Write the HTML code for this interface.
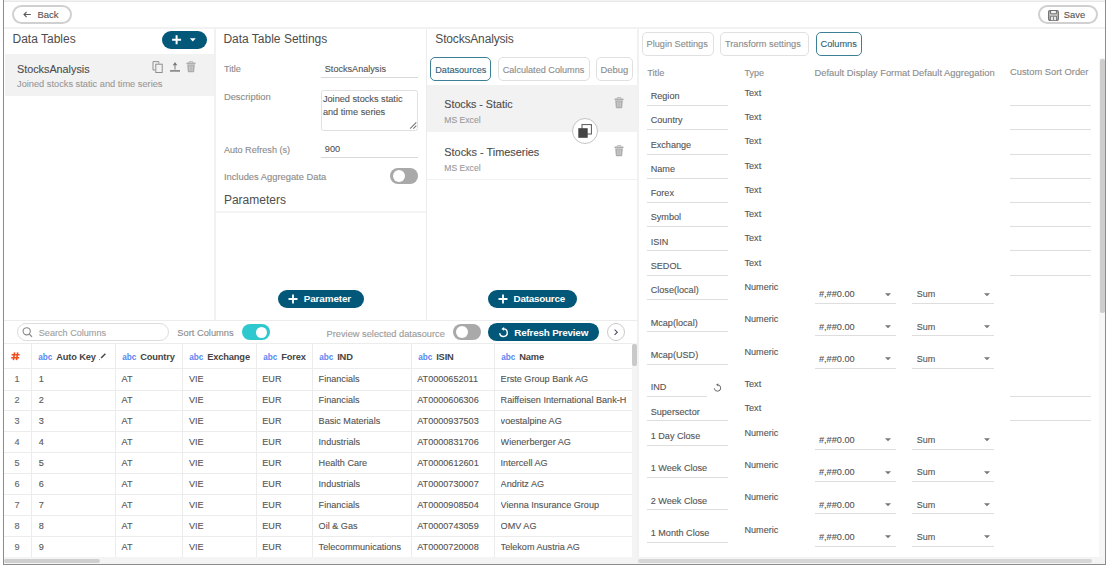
<!DOCTYPE html>
<html><head><meta charset="utf-8">
<style>
*{box-sizing:border-box;margin:0;padding:0}
html,body{width:1110px;height:568px;overflow:hidden;background:#fff;font-family:"Liberation Sans",sans-serif;color:#4a4a4a;position:relative}
.a{position:absolute}
.t{position:absolute;white-space:nowrap;line-height:1;-webkit-text-stroke:0.12px currentColor}
.b{-webkit-text-stroke:0}
</style></head>
<body>
<div class="a" style="left:4px;top:0px;width:1101px;height:1px;background:#f2f2f2"></div>
<div class="a" style="left:4px;top:1px;width:1101px;height:1px;background:#e9e9e9"></div>
<div class="a" style="left:3px;top:0px;width:1px;height:565px;background:#8c8c8c"></div>
<div class="a" style="left:1105px;top:0px;width:1px;height:565px;background:#8c8c8c"></div>
<div class="a" style="left:3px;top:564px;width:1103px;height:1px;background:#8c8c8c"></div>
<div class="a" style="left:4px;top:27px;width:1101px;height:2px;background:#f2f2f2"></div>
<div class="a" style="left:12px;top:5px;width:60px;height:19px;border:2px solid #d0d0d0;border-radius:9.5px;background:#fff"></div>
<svg class="a" style="left:22.5px;top:11px" width="9" height="7" viewBox="0 0 9 7"><path d="M1 3.5H7.8M3.6 0.8L1 3.5L3.6 6.2" stroke="#5a5a5a" stroke-width="1.1" fill="none"/></svg>
<div class="t" style="left:37.50px;top:10.16px;font-size:9.5px;color:#555;">Back</div>
<div class="a" style="left:1038px;top:5px;width:59.5px;height:19px;border:2px solid #d0d0d0;border-radius:9.5px;background:#fff"></div>
<svg class="a" style="left:1048px;top:9.5px" width="11" height="11" viewBox="0 0 11 11"><rect x="0.7" y="0.7" width="9.6" height="9.6" rx="1.2" stroke="#707070" stroke-width="1.3" fill="#d4d4d4"/><path d="M2.6 1V3.8H8.4V1" stroke="#6d6d6d" stroke-width="1" fill="#f4f4f4"/><path d="M2.4 10.2V6.2H8.6V10.2" stroke="#6d6d6d" stroke-width="0.9" fill="#e8e8e8"/><path d="M5.5 6.5V10" stroke="#6d6d6d" stroke-width="0.8"/></svg>
<div class="t" style="left:1063.80px;top:10.24px;font-size:9.4px;color:#555;">Save</div>
<div class="a" style="left:214px;top:29px;width:2px;height:291px;background:#f1f1f1"></div>
<div class="a" style="left:426px;top:29px;width:1px;height:291px;background:#ececec"></div>
<div class="a" style="left:637px;top:29px;width:2px;height:535px;background:#f1f1f1"></div>
<div class="a" style="left:4px;top:320px;width:633px;height:1px;background:#ececec"></div>
<div class="t b" style="left:12.50px;top:33.34px;font-size:12px;color:#4d4d4d;">Data Tables</div>
<div class="a" style="left:162px;top:31px;width:45px;height:18px;background:#035778;border-radius:9px"></div>
<svg class="a" style="left:171px;top:34px" width="28" height="12" viewBox="0 0 28 12"><path d="M5.6 1.2V10.2M1.1 5.7H10.1" stroke="#fff" stroke-width="2" fill="none"/><path d="M18.8 4.3H24.8L21.8 7.6Z" fill="#fff"/></svg>
<div class="a" style="left:5px;top:54px;width:209px;height:42px;background:#f2f2f2"></div>
<div class="t" style="left:17.00px;top:63.76px;font-size:10.8px;color:#4d4d4d;">StocksAnalysis</div>
<div class="t" style="left:17.00px;top:79.97px;font-size:9.25px;color:#9a9a9a;">Joined stocks static and time series</div>
<svg class="a" style="left:151.5px;top:61px" width="12" height="12" viewBox="0 0 12 12"><path d="M3 9H1V0.6H6.8V2.6" stroke="#8f8f8f" stroke-width="1" fill="none"/><rect x="3.8" y="3.2" width="6.4" height="8.3" stroke="#8f8f8f" stroke-width="1" fill="none"/></svg>
<svg class="a" style="left:168.5px;top:61.3px" width="12" height="11" viewBox="0 0 12 11"><path d="M6 8.6V1.8" stroke="#7a7a7a" stroke-width="1"/><path d="M3.6 4.2L6 1.2L8.4 4.2Z" fill="#7a7a7a"/><path d="M1 9.9H11" stroke="#7a7a7a" stroke-width="1.5"/></svg>
<svg class="a" style="left:186px;top:61px" width="10" height="12" viewBox="0 0 10 12"><path d="M3.3 1.6V0.9Q3.3 0.3 3.9 0.3H6.1Q6.7 0.3 6.7 0.9V1.6" stroke="#adadad" stroke-width="0.9" fill="none"/><rect x="0.4" y="1.6" width="9.2" height="1.6" rx="0.6" fill="#adadad"/><path d="M1.2 3.6H8.8L8.2 10.4Q8.1 11.2 7.3 11.2H2.7Q1.9 11.2 1.8 10.4Z" fill="#adadad"/><path d="M3.6 4.6V10M5 4.6V10M6.4 4.6V10" stroke="#e9e9e9" stroke-width="0.45"/></svg>
<div class="t b" style="left:223.40px;top:33.34px;font-size:12px;color:#4d4d4d;">Data Table Settings</div>
<div class="t" style="left:223.90px;top:65.11px;font-size:9.2px;color:#8c8c8c;">Title</div>
<div class="t" style="left:324.80px;top:64.80px;font-size:9.1px;color:#555;">StocksAnalysis</div>
<div class="a" style="left:321px;top:77px;width:97px;height:1px;background:#d9d9d9"></div>
<div class="t" style="left:223.90px;top:92.44px;font-size:9.4px;color:#8c8c8c;">Description</div>
<div class="a" style="left:321px;top:90px;width:97px;height:40.5px;border:1.3px solid #e0e0e0;border-radius:2.5px;background:#fff"></div>
<div class="t" style="left:322.90px;top:95.41px;font-size:9.2px;color:#555;">Joined stocks static</div>
<div class="t" style="left:322.90px;top:107.81px;font-size:9.2px;color:#555;">and time series</div>
<svg class="a" style="left:409px;top:121px" width="9" height="9" viewBox="0 0 9 9"><path d="M1.1 7.6L7.3 1.4M4.3 7.6L7.3 4.6" stroke="#7a7a7a" stroke-width="1.1"/></svg>
<div class="t" style="left:223.90px;top:145.60px;font-size:9.1px;color:#8c8c8c;">Auto Refresh (s)</div>
<div class="t" style="left:324.80px;top:145.11px;font-size:9.2px;color:#555;">900</div>
<div class="a" style="left:321px;top:157px;width:97px;height:1px;background:#d9d9d9"></div>
<div class="t" style="left:223.90px;top:172.99px;font-size:9.35px;color:#8c8c8c;">Includes Aggregate Data</div>
<div class="a" style="left:390px;top:168px;width:28px;height:16px;background:#a9a9a9;border-radius:8px"></div>
<div class="a" style="left:392.7px;top:169.8px;width:12px;height:12px;background:#fff;border-radius:50%"></div>
<div class="t b" style="left:223.90px;top:193.64px;font-size:12px;color:#4d4d4d;">Parameters</div>
<div class="a" style="left:216px;top:211px;width:210px;height:2px;background:#f4f4f4"></div>
<div class="a" style="left:278px;top:290px;width:86px;height:18px;background:#035778;border-radius:9px"></div>
<svg class="a" style="left:288px;top:294px" width="10" height="10" viewBox="0 0 10 10"><path d="M5 0.5V9.5M0.5 5H9.5" stroke="#fff" stroke-width="1.8"/></svg>
<div class="t b" style="left:303.70px;top:293.82px;font-size:9.9px;color:#fff;font-weight:bold;letter-spacing:-0.1px;">Parameter</div>
<div class="t b" style="left:435.30px;top:32.84px;font-size:12px;color:#4d4d4d;letter-spacing:-0.17px;">StocksAnalysis</div>
<div class="a" style="left:430px;top:57px;width:61px;height:24px;border:1.3px solid #3d7f97;border-radius:5px"></div>
<div class="t" style="left:435.30px;top:65.90px;font-size:9.1px;color:#2f5f78;">Datasources</div>
<div class="a" style="left:497.5px;top:57px;width:92px;height:24px;border:1.4px solid #e0e0e0;border-radius:5px"></div>
<div class="t" style="left:502.70px;top:65.85px;font-size:9.15px;color:#8c8c8c;">Calculated Columns</div>
<div class="a" style="left:596px;top:57px;width:37px;height:24px;border:1.4px solid #e0e0e0;border-radius:5px"></div>
<div class="t" style="left:600.50px;top:64.94px;font-size:9.4px;color:#8c8c8c;">Debug</div>
<div class="a" style="left:427px;top:85px;width:210px;height:47px;background:#f2f2f2"></div>
<div class="t" style="left:444.30px;top:98.84px;font-size:10.7px;color:#4d4d4d;">Stocks - Static</div>
<div class="t" style="left:444.30px;top:116.02px;font-size:8.6px;color:#9a9a9a;">MS Excel</div>
<svg class="a" style="left:613.5px;top:97px" width="10" height="12" viewBox="0 0 10 12"><path d="M3.3 1.6V0.9Q3.3 0.3 3.9 0.3H6.1Q6.7 0.3 6.7 0.9V1.6" stroke="#adadad" stroke-width="0.9" fill="none"/><rect x="0.4" y="1.6" width="9.2" height="1.6" rx="0.6" fill="#adadad"/><path d="M1.2 3.6H8.8L8.2 10.4Q8.1 11.2 7.3 11.2H2.7Q1.9 11.2 1.8 10.4Z" fill="#adadad"/><path d="M3.6 4.6V10M5 4.6V10M6.4 4.6V10" stroke="#e9e9e9" stroke-width="0.45"/></svg>
<div class="t" style="left:444.30px;top:147.27px;font-size:10.9px;color:#4d4d4d;">Stocks - Timeseries</div>
<div class="t" style="left:444.30px;top:163.62px;font-size:8.6px;color:#9a9a9a;">MS Excel</div>
<svg class="a" style="left:613.5px;top:145px" width="10" height="12" viewBox="0 0 10 12"><path d="M3.3 1.6V0.9Q3.3 0.3 3.9 0.3H6.1Q6.7 0.3 6.7 0.9V1.6" stroke="#adadad" stroke-width="0.9" fill="none"/><rect x="0.4" y="1.6" width="9.2" height="1.6" rx="0.6" fill="#adadad"/><path d="M1.2 3.6H8.8L8.2 10.4Q8.1 11.2 7.3 11.2H2.7Q1.9 11.2 1.8 10.4Z" fill="#adadad"/><path d="M3.6 4.6V10M5 4.6V10M6.4 4.6V10" stroke="#e9e9e9" stroke-width="0.45"/></svg>
<div class="a" style="left:427px;top:179px;width:210px;height:1px;background:#f2f2f2"></div>
<div class="a" style="left:572px;top:118px;width:26px;height:26px;border:1.3px solid #c4c4c4;border-radius:50%;background:#fff"></div>
<svg class="a" style="left:578px;top:124px" width="14" height="14" viewBox="0 0 14 14"><rect x="4" y="0.6" width="9.4" height="9.4" stroke="#555" stroke-width="1" fill="#fff"/><rect x="0.3" y="4.2" width="9.4" height="9.6" fill="#444"/></svg>
<div class="a" style="left:488px;top:290px;width:89px;height:18px;background:#035778;border-radius:9px"></div>
<svg class="a" style="left:498px;top:294px" width="10" height="10" viewBox="0 0 10 10"><path d="M5 0.5V9.5M0.5 5H9.5" stroke="#fff" stroke-width="1.8"/></svg>
<div class="t b" style="left:513.50px;top:293.82px;font-size:9.9px;color:#fff;font-weight:bold;letter-spacing:-0.24px;">Datasource</div>
<div class="a" style="left:17px;top:323px;width:152px;height:18px;border:1.3px solid #dcdcdc;border-radius:9px;background:#fff"></div>
<svg class="a" style="left:22px;top:326px" width="12" height="12" viewBox="0 0 12 12"><circle cx="4.7" cy="5.3" r="3.6" stroke="#8a8a8a" stroke-width="1.1" fill="none"/><path d="M7.3 8L10 10.8" stroke="#8a8a8a" stroke-width="1.2"/></svg>
<div class="t" style="left:38.80px;top:328.80px;font-size:9.1px;color:#a0a0a0;">Search Columns</div>
<div class="t" style="left:177.30px;top:328.63px;font-size:9.3px;color:#8c8c8c;">Sort Columns</div>
<div class="a" style="left:242.2px;top:324px;width:27.8px;height:16.3px;background:#2fc8cf;border-radius:8.2px"></div>
<div class="a" style="left:255.8px;top:326.6px;width:11.4px;height:11.4px;background:#fff;border-radius:50%"></div>
<div class="t" style="left:326.60px;top:329.77px;font-size:9.25px;color:#9a9a9a;">Preview selected datasource</div>
<div class="a" style="left:453px;top:324px;width:28px;height:16px;background:#a9a9a9;border-radius:8px"></div>
<div class="a" style="left:455.7px;top:326px;width:12px;height:12px;background:#fff;border-radius:50%"></div>
<div class="a" style="left:488.3px;top:323.2px;width:110.5px;height:17.7px;background:#035778;border-radius:8.8px"></div>
<svg class="a" style="left:498px;top:327px" width="11" height="11" viewBox="0 0 11 11"><path d="M1.7 6.2A3.8 3.8 0 1 0 5.4 1.9" stroke="#fff" stroke-width="1.4" fill="none"/><path d="M3.4 1.9L6.1 0.1V3.7Z" fill="#fff"/></svg>
<div class="t b" style="left:514.30px;top:327.92px;font-size:9.9px;color:#fff;font-weight:bold;letter-spacing:-0.2px;">Refresh Preview</div>
<div class="a" style="left:606.7px;top:323.1px;width:18px;height:18px;border:1.5px solid #cbcbcb;border-radius:50%;background:#fff"></div>
<svg class="a" style="left:612px;top:328px" width="8" height="8" viewBox="0 0 8 8"><path d="M2.6 1.6L5.3 4.2L2.6 6.8" stroke="#505060" stroke-width="1.1" fill="none"/></svg>
<div class="a" style="left:4px;top:343px;width:628px;height:1px;background:#ececec"></div>
<div class="a" style="left:4px;top:368px;width:628px;height:1px;background:#ececec"></div>
<div class="a" style="left:31px;top:343px;width:1px;height:214px;background:#ececec"></div>
<div class="a" style="left:115px;top:343px;width:1px;height:214px;background:#ececec"></div>
<div class="a" style="left:182px;top:343px;width:1px;height:214px;background:#ececec"></div>
<div class="a" style="left:256px;top:343px;width:1px;height:214px;background:#ececec"></div>
<div class="a" style="left:312px;top:343px;width:1px;height:214px;background:#ececec"></div>
<div class="a" style="left:411px;top:343px;width:1px;height:214px;background:#ececec"></div>
<div class="a" style="left:494px;top:343px;width:1px;height:214px;background:#ececec"></div>
<svg class="a" style="left:10.5px;top:352px" width="9" height="8.5" viewBox="0 0 9 8.5"><path d="M3.6 0.3L2.4 8.2M6.7 0.3L5.5 8.2M0.6 2.8H8.6M0.2 5.7H8.2" stroke="#f04e23" stroke-width="1.6" fill="none"/></svg>
<div class="t b" style="left:38.30px;top:354.16px;font-size:8.2px;color:#5a86f2;font-weight:bold;">abc</div>
<div class="t b" style="left:56.20px;top:352.63px;font-size:9.3px;color:#454545;font-weight:bold;letter-spacing:-0.15px;">Auto Key</div>
<div class="t b" style="left:122.30px;top:354.16px;font-size:8.2px;color:#5a86f2;font-weight:bold;">abc</div>
<div class="t b" style="left:140.20px;top:352.63px;font-size:9.3px;color:#454545;font-weight:bold;letter-spacing:-0.15px;">Country</div>
<div class="t b" style="left:189.30px;top:354.16px;font-size:8.2px;color:#5a86f2;font-weight:bold;">abc</div>
<div class="t b" style="left:207.20px;top:352.63px;font-size:9.3px;color:#454545;font-weight:bold;letter-spacing:-0.15px;">Exchange</div>
<div class="t b" style="left:263.30px;top:354.16px;font-size:8.2px;color:#5a86f2;font-weight:bold;">abc</div>
<div class="t b" style="left:281.20px;top:352.63px;font-size:9.3px;color:#454545;font-weight:bold;letter-spacing:-0.15px;">Forex</div>
<div class="t b" style="left:319.30px;top:354.16px;font-size:8.2px;color:#5a86f2;font-weight:bold;">abc</div>
<div class="t b" style="left:337.20px;top:352.63px;font-size:9.3px;color:#454545;font-weight:bold;letter-spacing:-0.15px;">IND</div>
<div class="t b" style="left:418.30px;top:354.16px;font-size:8.2px;color:#5a86f2;font-weight:bold;">abc</div>
<div class="t b" style="left:436.20px;top:352.63px;font-size:9.3px;color:#454545;font-weight:bold;letter-spacing:-0.15px;">ISIN</div>
<div class="t b" style="left:501.30px;top:354.16px;font-size:8.2px;color:#5a86f2;font-weight:bold;">abc</div>
<div class="t b" style="left:519.20px;top:352.63px;font-size:9.3px;color:#454545;font-weight:bold;letter-spacing:-0.15px;">Name</div>
<svg class="a" style="left:98px;top:352px" width="9" height="9" viewBox="0 0 9 9"><path d="M2.6 5.6L6.9 1.3L7.9 2.3L3.6 6.6Z" fill="#444"/><path d="M0.9 8.2L1.3 6.9L2.2 7.8Z" fill="#555"/></svg>
<div class="a" style="left:4px;top:390px;width:628px;height:1px;background:#ececec"></div>
<div class="t" style="left:14.50px;top:375.40px;font-size:9.1px;color:#666;">1</div>
<div class="t" style="left:38.70px;top:375.40px;font-size:9.1px;color:#555;">1</div>
<div class="t" style="left:121.50px;top:375.40px;font-size:9.1px;color:#555;">AT</div>
<div class="t" style="left:189.00px;top:375.40px;font-size:9.1px;color:#555;">VIE</div>
<div class="t" style="left:262.30px;top:375.40px;font-size:9.1px;color:#555;">EUR</div>
<div class="t" style="left:318.60px;top:375.40px;font-size:9.1px;color:#555;">Financials</div>
<div class="t" style="left:417.20px;top:375.40px;font-size:9.1px;color:#555;">AT0000652011</div>
<div class="t" style="left:500.6px;top:375.40px;font-size:9.1px;color:#555;width:131px;overflow:hidden">Erste Group Bank AG</div>
<div class="a" style="left:4px;top:410px;width:628px;height:1px;background:#ececec"></div>
<div class="t" style="left:14.50px;top:396.30px;font-size:9.1px;color:#666;">2</div>
<div class="t" style="left:38.70px;top:396.30px;font-size:9.1px;color:#555;">2</div>
<div class="t" style="left:121.50px;top:396.30px;font-size:9.1px;color:#555;">AT</div>
<div class="t" style="left:189.00px;top:396.30px;font-size:9.1px;color:#555;">VIE</div>
<div class="t" style="left:262.30px;top:396.30px;font-size:9.1px;color:#555;">EUR</div>
<div class="t" style="left:318.60px;top:396.30px;font-size:9.1px;color:#555;">Financials</div>
<div class="t" style="left:417.20px;top:396.30px;font-size:9.1px;color:#555;">AT0000606306</div>
<div class="t" style="left:500.6px;top:396.30px;font-size:9.1px;color:#555;width:131px;overflow:hidden">Raiffeisen International Bank-H</div>
<div class="a" style="left:4px;top:431px;width:628px;height:1px;background:#ececec"></div>
<div class="t" style="left:14.50px;top:417.20px;font-size:9.1px;color:#666;">3</div>
<div class="t" style="left:38.70px;top:417.20px;font-size:9.1px;color:#555;">3</div>
<div class="t" style="left:121.50px;top:417.20px;font-size:9.1px;color:#555;">AT</div>
<div class="t" style="left:189.00px;top:417.20px;font-size:9.1px;color:#555;">VIE</div>
<div class="t" style="left:262.30px;top:417.20px;font-size:9.1px;color:#555;">EUR</div>
<div class="t" style="left:318.60px;top:417.20px;font-size:9.1px;color:#555;">Basic Materials</div>
<div class="t" style="left:417.20px;top:417.20px;font-size:9.1px;color:#555;">AT0000937503</div>
<div class="t" style="left:500.6px;top:417.20px;font-size:9.1px;color:#555;width:131px;overflow:hidden">voestalpine AG</div>
<div class="a" style="left:4px;top:452px;width:628px;height:1px;background:#ececec"></div>
<div class="t" style="left:14.50px;top:438.10px;font-size:9.1px;color:#666;">4</div>
<div class="t" style="left:38.70px;top:438.10px;font-size:9.1px;color:#555;">4</div>
<div class="t" style="left:121.50px;top:438.10px;font-size:9.1px;color:#555;">AT</div>
<div class="t" style="left:189.00px;top:438.10px;font-size:9.1px;color:#555;">VIE</div>
<div class="t" style="left:262.30px;top:438.10px;font-size:9.1px;color:#555;">EUR</div>
<div class="t" style="left:318.60px;top:438.10px;font-size:9.1px;color:#555;">Industrials</div>
<div class="t" style="left:417.20px;top:438.10px;font-size:9.1px;color:#555;">AT0000831706</div>
<div class="t" style="left:500.6px;top:438.10px;font-size:9.1px;color:#555;width:131px;overflow:hidden">Wienerberger AG</div>
<div class="a" style="left:4px;top:473px;width:628px;height:1px;background:#ececec"></div>
<div class="t" style="left:14.50px;top:459.00px;font-size:9.1px;color:#666;">5</div>
<div class="t" style="left:38.70px;top:459.00px;font-size:9.1px;color:#555;">5</div>
<div class="t" style="left:121.50px;top:459.00px;font-size:9.1px;color:#555;">AT</div>
<div class="t" style="left:189.00px;top:459.00px;font-size:9.1px;color:#555;">VIE</div>
<div class="t" style="left:262.30px;top:459.00px;font-size:9.1px;color:#555;">EUR</div>
<div class="t" style="left:318.60px;top:459.00px;font-size:9.1px;color:#555;">Health Care</div>
<div class="t" style="left:417.20px;top:459.00px;font-size:9.1px;color:#555;">AT0000612601</div>
<div class="t" style="left:500.6px;top:459.00px;font-size:9.1px;color:#555;width:131px;overflow:hidden">Intercell AG</div>
<div class="a" style="left:4px;top:494px;width:628px;height:1px;background:#ececec"></div>
<div class="t" style="left:14.50px;top:479.90px;font-size:9.1px;color:#666;">6</div>
<div class="t" style="left:38.70px;top:479.90px;font-size:9.1px;color:#555;">6</div>
<div class="t" style="left:121.50px;top:479.90px;font-size:9.1px;color:#555;">AT</div>
<div class="t" style="left:189.00px;top:479.90px;font-size:9.1px;color:#555;">VIE</div>
<div class="t" style="left:262.30px;top:479.90px;font-size:9.1px;color:#555;">EUR</div>
<div class="t" style="left:318.60px;top:479.90px;font-size:9.1px;color:#555;">Industrials</div>
<div class="t" style="left:417.20px;top:479.90px;font-size:9.1px;color:#555;">AT0000730007</div>
<div class="t" style="left:500.6px;top:479.90px;font-size:9.1px;color:#555;width:131px;overflow:hidden">Andritz AG</div>
<div class="a" style="left:4px;top:515px;width:628px;height:1px;background:#ececec"></div>
<div class="t" style="left:14.50px;top:500.80px;font-size:9.1px;color:#666;">7</div>
<div class="t" style="left:38.70px;top:500.80px;font-size:9.1px;color:#555;">7</div>
<div class="t" style="left:121.50px;top:500.80px;font-size:9.1px;color:#555;">AT</div>
<div class="t" style="left:189.00px;top:500.80px;font-size:9.1px;color:#555;">VIE</div>
<div class="t" style="left:262.30px;top:500.80px;font-size:9.1px;color:#555;">EUR</div>
<div class="t" style="left:318.60px;top:500.80px;font-size:9.1px;color:#555;">Financials</div>
<div class="t" style="left:417.20px;top:500.80px;font-size:9.1px;color:#555;">AT0000908504</div>
<div class="t" style="left:500.6px;top:500.80px;font-size:9.1px;color:#555;width:131px;overflow:hidden">Vienna Insurance Group</div>
<div class="a" style="left:4px;top:536px;width:628px;height:1px;background:#ececec"></div>
<div class="t" style="left:14.50px;top:521.70px;font-size:9.1px;color:#666;">8</div>
<div class="t" style="left:38.70px;top:521.70px;font-size:9.1px;color:#555;">8</div>
<div class="t" style="left:121.50px;top:521.70px;font-size:9.1px;color:#555;">AT</div>
<div class="t" style="left:189.00px;top:521.70px;font-size:9.1px;color:#555;">VIE</div>
<div class="t" style="left:262.30px;top:521.70px;font-size:9.1px;color:#555;">EUR</div>
<div class="t" style="left:318.60px;top:521.70px;font-size:9.1px;color:#555;">Oil &amp; Gas</div>
<div class="t" style="left:417.20px;top:521.70px;font-size:9.1px;color:#555;">AT0000743059</div>
<div class="t" style="left:500.6px;top:521.70px;font-size:9.1px;color:#555;width:131px;overflow:hidden">OMV AG</div>
<div class="a" style="left:4px;top:557px;width:628px;height:1px;background:#ececec"></div>
<div class="t" style="left:14.50px;top:542.60px;font-size:9.1px;color:#666;">9</div>
<div class="t" style="left:38.70px;top:542.60px;font-size:9.1px;color:#555;">9</div>
<div class="t" style="left:121.50px;top:542.60px;font-size:9.1px;color:#555;">AT</div>
<div class="t" style="left:189.00px;top:542.60px;font-size:9.1px;color:#555;">VIE</div>
<div class="t" style="left:262.30px;top:542.60px;font-size:9.1px;color:#555;">EUR</div>
<div class="t" style="left:318.60px;top:542.60px;font-size:9.1px;color:#555;">Telecommunications</div>
<div class="t" style="left:417.20px;top:542.60px;font-size:9.1px;color:#555;">AT0000720008</div>
<div class="t" style="left:500.6px;top:542.60px;font-size:9.1px;color:#555;width:131px;overflow:hidden">Telekom Austria AG</div>
<div class="a" style="left:632px;top:343px;width:5px;height:214px;background:#f4f4f4"></div>
<div class="a" style="left:632px;top:344px;width:5px;height:22px;background:#c9c9c9;border-radius:2px"></div>
<div class="a" style="left:4px;top:557px;width:633px;height:7px;background:#f4f4f4"></div>
<div class="a" style="left:4px;top:559px;width:96px;height:4px;background:#cfcfcf;border-radius:2px"></div>
<div class="a" style="left:642px;top:32px;width:72px;height:24px;border:1.4px solid #e0e0e0;border-radius:5px"></div>
<div class="t" style="left:646.50px;top:40.41px;font-size:9.2px;color:#8c8c8c;">Plugin Settings</div>
<div class="a" style="left:720px;top:32px;width:89px;height:24px;border:1.4px solid #e0e0e0;border-radius:5px"></div>
<div class="t" style="left:725.00px;top:40.41px;font-size:9.2px;color:#8c8c8c;">Transform settings</div>
<div class="a" style="left:816px;top:32px;width:46px;height:24px;border:1.3px solid #3d7f97;border-radius:5px"></div>
<div class="t" style="left:820.50px;top:40.41px;font-size:9.2px;color:#2f5f78;">Columns</div>
<div class="t" style="left:647.20px;top:68.53px;font-size:9.3px;color:#8c8c8c;">Title</div>
<div class="t" style="left:744.50px;top:68.78px;font-size:9.0px;color:#8c8c8c;">Type</div>
<div class="t" style="left:814.50px;top:67.74px;font-size:9.4px;color:#8c8c8c;">Default Display Format</div>
<div class="t" style="left:912.30px;top:67.74px;font-size:9.4px;color:#8c8c8c;">Default Aggregation</div>
<div class="t" style="left:1010.00px;top:67.99px;font-size:9.35px;color:#8c8c8c;">Custom Sort Order</div>
<div class="a" style="left:647px;top:105px;width:81px;height:1px;background:#dedede"></div>
<div class="t" style="left:650.70px;top:92.10px;font-size:9.1px;color:#555;">Region</div>
<div class="t" style="left:744.50px;top:88.90px;font-size:9.1px;color:#555;">Text</div>
<div class="a" style="left:1010px;top:105px;width:81px;height:1px;background:#dedede"></div>
<div class="a" style="left:647px;top:129px;width:81px;height:1px;background:#dedede"></div>
<div class="t" style="left:650.70px;top:116.35px;font-size:9.1px;color:#555;">Country</div>
<div class="t" style="left:744.50px;top:113.15px;font-size:9.1px;color:#555;">Text</div>
<div class="a" style="left:1010px;top:129px;width:81px;height:1px;background:#dedede"></div>
<div class="a" style="left:647px;top:154px;width:81px;height:1px;background:#dedede"></div>
<div class="t" style="left:650.70px;top:140.60px;font-size:9.1px;color:#555;">Exchange</div>
<div class="t" style="left:744.50px;top:137.40px;font-size:9.1px;color:#555;">Text</div>
<div class="a" style="left:1010px;top:154px;width:81px;height:1px;background:#dedede"></div>
<div class="a" style="left:647px;top:178px;width:81px;height:1px;background:#dedede"></div>
<div class="t" style="left:650.70px;top:164.85px;font-size:9.1px;color:#555;">Name</div>
<div class="t" style="left:744.50px;top:161.65px;font-size:9.1px;color:#555;">Text</div>
<div class="a" style="left:1010px;top:178px;width:81px;height:1px;background:#dedede"></div>
<div class="a" style="left:647px;top:202px;width:81px;height:1px;background:#dedede"></div>
<div class="t" style="left:650.70px;top:189.10px;font-size:9.1px;color:#555;">Forex</div>
<div class="t" style="left:744.50px;top:185.90px;font-size:9.1px;color:#555;">Text</div>
<div class="a" style="left:1010px;top:202px;width:81px;height:1px;background:#dedede"></div>
<div class="a" style="left:647px;top:226px;width:81px;height:1px;background:#dedede"></div>
<div class="t" style="left:650.70px;top:213.35px;font-size:9.1px;color:#555;">Symbol</div>
<div class="t" style="left:744.50px;top:210.15px;font-size:9.1px;color:#555;">Text</div>
<div class="a" style="left:1010px;top:226px;width:81px;height:1px;background:#dedede"></div>
<div class="a" style="left:647px;top:250px;width:81px;height:1px;background:#dedede"></div>
<div class="t" style="left:650.70px;top:237.60px;font-size:9.1px;color:#555;">ISIN</div>
<div class="t" style="left:744.50px;top:234.40px;font-size:9.1px;color:#555;">Text</div>
<div class="a" style="left:1010px;top:250px;width:81px;height:1px;background:#dedede"></div>
<div class="a" style="left:647px;top:275px;width:81px;height:1px;background:#dedede"></div>
<div class="t" style="left:650.70px;top:261.85px;font-size:9.1px;color:#555;">SEDOL</div>
<div class="t" style="left:744.50px;top:258.65px;font-size:9.1px;color:#555;">Text</div>
<div class="a" style="left:1010px;top:275px;width:81px;height:1px;background:#dedede"></div>
<div class="a" style="left:647px;top:299px;width:81px;height:1px;background:#dedede"></div>
<div class="t" style="left:650.70px;top:286.10px;font-size:9.1px;color:#555;">Close(local)</div>
<div class="t" style="left:744.50px;top:282.90px;font-size:9.1px;color:#555;">Numeric</div>
<div class="a" style="left:815px;top:303px;width:81px;height:1px;background:#dedede"></div>
<div class="a" style="left:912px;top:303px;width:82px;height:1px;background:#dedede"></div>
<div class="t" style="left:818.90px;top:290.21px;font-size:9.2px;color:#555;">#,##0.00</div>
<div class="t" style="left:916.80px;top:290.38px;font-size:9.0px;color:#555;">Sum</div>
<svg class="a" style="left:885px;top:292.5px" width="6" height="4" viewBox="0 0 6 4"><path d="M0 0.3H6L3 3.3Z" fill="#777"/></svg>
<svg class="a" style="left:983.5px;top:292.5px" width="6" height="4" viewBox="0 0 6 4"><path d="M0 0.3H6L3 3.3Z" fill="#777"/></svg>
<div class="a" style="left:647px;top:331px;width:81px;height:1px;background:#dedede"></div>
<div class="t" style="left:650.70px;top:318.50px;font-size:9.1px;color:#555;">Mcap(local)</div>
<div class="t" style="left:744.50px;top:315.30px;font-size:9.1px;color:#555;">Numeric</div>
<div class="a" style="left:815px;top:335px;width:81px;height:1px;background:#dedede"></div>
<div class="a" style="left:912px;top:335px;width:82px;height:1px;background:#dedede"></div>
<div class="t" style="left:818.90px;top:322.61px;font-size:9.2px;color:#555;">#,##0.00</div>
<div class="t" style="left:916.80px;top:322.78px;font-size:9.0px;color:#555;">Sum</div>
<svg class="a" style="left:885px;top:324.9px" width="6" height="4" viewBox="0 0 6 4"><path d="M0 0.3H6L3 3.3Z" fill="#777"/></svg>
<svg class="a" style="left:983.5px;top:324.9px" width="6" height="4" viewBox="0 0 6 4"><path d="M0 0.3H6L3 3.3Z" fill="#777"/></svg>
<div class="a" style="left:647px;top:364px;width:81px;height:1px;background:#dedede"></div>
<div class="t" style="left:650.70px;top:350.90px;font-size:9.1px;color:#555;">Mcap(USD)</div>
<div class="t" style="left:744.50px;top:347.70px;font-size:9.1px;color:#555;">Numeric</div>
<div class="a" style="left:815px;top:368px;width:81px;height:1px;background:#dedede"></div>
<div class="a" style="left:912px;top:368px;width:82px;height:1px;background:#dedede"></div>
<div class="t" style="left:818.90px;top:355.01px;font-size:9.2px;color:#555;">#,##0.00</div>
<div class="t" style="left:916.80px;top:355.18px;font-size:9.0px;color:#555;">Sum</div>
<svg class="a" style="left:885px;top:357.3px" width="6" height="4" viewBox="0 0 6 4"><path d="M0 0.3H6L3 3.3Z" fill="#777"/></svg>
<svg class="a" style="left:983.5px;top:357.3px" width="6" height="4" viewBox="0 0 6 4"><path d="M0 0.3H6L3 3.3Z" fill="#777"/></svg>
<div class="a" style="left:647px;top:396px;width:60px;height:1px;background:#dedede"></div>
<svg class="a" style="left:713px;top:383px" width="9" height="9" viewBox="0 0 9 9"><path d="M1.3 5.3A3.2 3.2 0 1 0 4.4 1.8" stroke="#666" stroke-width="1" fill="none"/><path d="M3.0 1.8L5.2 0.3V3.3Z" fill="#666"/></svg>
<div class="t" style="left:650.70px;top:383.30px;font-size:9.1px;color:#555;">IND</div>
<div class="t" style="left:744.50px;top:380.10px;font-size:9.1px;color:#555;">Text</div>
<div class="a" style="left:1010px;top:396px;width:81px;height:1px;background:#dedede"></div>
<div class="a" style="left:647px;top:420px;width:81px;height:1px;background:#dedede"></div>
<div class="t" style="left:650.70px;top:407.55px;font-size:9.1px;color:#555;">Supersector</div>
<div class="t" style="left:744.50px;top:404.35px;font-size:9.1px;color:#555;">Text</div>
<div class="a" style="left:1010px;top:420px;width:81px;height:1px;background:#dedede"></div>
<div class="a" style="left:647px;top:445px;width:81px;height:1px;background:#dedede"></div>
<div class="t" style="left:650.70px;top:431.80px;font-size:9.1px;color:#555;">1 Day Close</div>
<div class="t" style="left:744.50px;top:428.60px;font-size:9.1px;color:#555;">Numeric</div>
<div class="a" style="left:815px;top:449px;width:81px;height:1px;background:#dedede"></div>
<div class="a" style="left:912px;top:449px;width:82px;height:1px;background:#dedede"></div>
<div class="t" style="left:818.90px;top:435.91px;font-size:9.2px;color:#555;">#,##0.00</div>
<div class="t" style="left:916.80px;top:436.08px;font-size:9.0px;color:#555;">Sum</div>
<svg class="a" style="left:885px;top:438.2px" width="6" height="4" viewBox="0 0 6 4"><path d="M0 0.3H6L3 3.3Z" fill="#777"/></svg>
<svg class="a" style="left:983.5px;top:438.2px" width="6" height="4" viewBox="0 0 6 4"><path d="M0 0.3H6L3 3.3Z" fill="#777"/></svg>
<div class="a" style="left:647px;top:477px;width:81px;height:1px;background:#dedede"></div>
<div class="t" style="left:650.70px;top:464.20px;font-size:9.1px;color:#555;">1 Week Close</div>
<div class="t" style="left:744.50px;top:461.00px;font-size:9.1px;color:#555;">Numeric</div>
<div class="a" style="left:815px;top:481px;width:81px;height:1px;background:#dedede"></div>
<div class="a" style="left:912px;top:481px;width:82px;height:1px;background:#dedede"></div>
<div class="t" style="left:818.90px;top:468.31px;font-size:9.2px;color:#555;">#,##0.00</div>
<div class="t" style="left:916.80px;top:468.48px;font-size:9.0px;color:#555;">Sum</div>
<svg class="a" style="left:885px;top:470.6px" width="6" height="4" viewBox="0 0 6 4"><path d="M0 0.3H6L3 3.3Z" fill="#777"/></svg>
<svg class="a" style="left:983.5px;top:470.6px" width="6" height="4" viewBox="0 0 6 4"><path d="M0 0.3H6L3 3.3Z" fill="#777"/></svg>
<div class="a" style="left:647px;top:509px;width:81px;height:1px;background:#dedede"></div>
<div class="t" style="left:650.70px;top:496.60px;font-size:9.1px;color:#555;">2 Week Close</div>
<div class="t" style="left:744.50px;top:493.40px;font-size:9.1px;color:#555;">Numeric</div>
<div class="a" style="left:815px;top:513px;width:81px;height:1px;background:#dedede"></div>
<div class="a" style="left:912px;top:513px;width:82px;height:1px;background:#dedede"></div>
<div class="t" style="left:818.90px;top:500.71px;font-size:9.2px;color:#555;">#,##0.00</div>
<div class="t" style="left:916.80px;top:500.88px;font-size:9.0px;color:#555;">Sum</div>
<svg class="a" style="left:885px;top:503.0px" width="6" height="4" viewBox="0 0 6 4"><path d="M0 0.3H6L3 3.3Z" fill="#777"/></svg>
<svg class="a" style="left:983.5px;top:503.0px" width="6" height="4" viewBox="0 0 6 4"><path d="M0 0.3H6L3 3.3Z" fill="#777"/></svg>
<div class="a" style="left:647px;top:542px;width:81px;height:1px;background:#dedede"></div>
<div class="t" style="left:650.70px;top:529.00px;font-size:9.1px;color:#555;">1 Month Close</div>
<div class="t" style="left:744.50px;top:525.80px;font-size:9.1px;color:#555;">Numeric</div>
<div class="a" style="left:815px;top:546px;width:81px;height:1px;background:#dedede"></div>
<div class="a" style="left:912px;top:546px;width:82px;height:1px;background:#dedede"></div>
<div class="t" style="left:818.90px;top:533.11px;font-size:9.2px;color:#555;">#,##0.00</div>
<div class="t" style="left:916.80px;top:533.28px;font-size:9.0px;color:#555;">Sum</div>
<svg class="a" style="left:885px;top:535.4px" width="6" height="4" viewBox="0 0 6 4"><path d="M0 0.3H6L3 3.3Z" fill="#777"/></svg>
<svg class="a" style="left:983.5px;top:535.4px" width="6" height="4" viewBox="0 0 6 4"><path d="M0 0.3H6L3 3.3Z" fill="#777"/></svg>
<div class="a" style="left:1099px;top:58px;width:6px;height:499px;background:#f6f6f6"></div>
<div class="a" style="left:1099.5px;top:59px;width:5px;height:254px;background:#cdcdcd;border-radius:2px"></div>
<div class="a" style="left:638px;top:557px;width:467px;height:7px;background:#f4f4f4"></div>
<div class="a" style="left:638px;top:559px;width:454px;height:4px;background:#d6d6d6;border-radius:2px"></div>
</body></html>
